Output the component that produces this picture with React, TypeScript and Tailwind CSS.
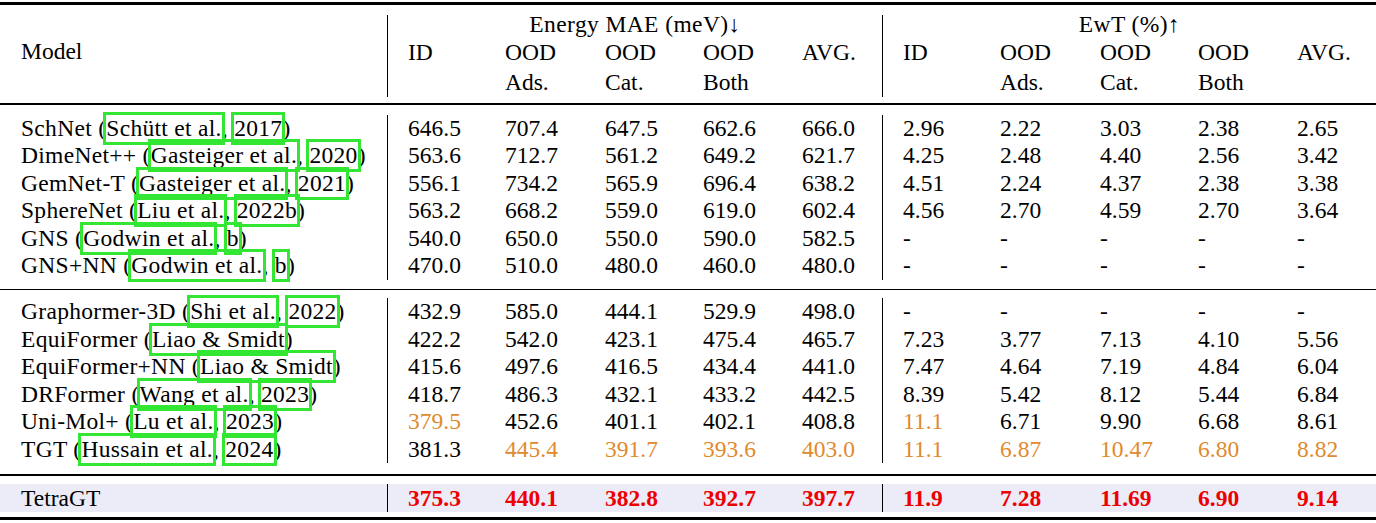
import type { ReactNode } from 'react';

type RowData = {
  model: ReactNode;
  e: string[];
  w: string[];
};

// cite link boxes drawn by the pdf viewer over the reference
function Cite({ children }: { children: ReactNode }) {
  return (
    <span className="relative">
      {children}
      <span className="pointer-events-none absolute -left-[3px] -right-[3px] -top-[3px] -bottom-[4px] border-[3px] border-[#33e633]" />
    </span>
  );
}

function Ref({ name, who, year }: { name: string; who: string; year?: string }) {
  return (
    <>
      {name} (<Cite>{who}</Cite>
      {year && (
        <>
          , <Cite>{year}</Cite>
        </>
      )}
      )
    </>
  );
}

const dash = ['-', '-', '-', '-', '-'];

const groupA: RowData[] = [
  {
    model: <Ref name="SchNet" who="Schütt et al." year="2017" />,
    e: ['646.5', '707.4', '647.5', '662.6', '666.0'],
    w: ['2.96', '2.22', '3.03', '2.38', '2.65'],
  },
  {
    model: <Ref name="DimeNet++" who="Gasteiger et al." year="2020" />,
    e: ['563.6', '712.7', '561.2', '649.2', '621.7'],
    w: ['4.25', '2.48', '4.40', '2.56', '3.42'],
  },
  {
    model: <Ref name="GemNet-T" who="Gasteiger et al." year="2021" />,
    e: ['556.1', '734.2', '565.9', '696.4', '638.2'],
    w: ['4.51', '2.24', '4.37', '2.38', '3.38'],
  },
  {
    model: <Ref name="SphereNet" who="Liu et al." year="2022b" />,
    e: ['563.2', '668.2', '559.0', '619.0', '602.4'],
    w: ['4.56', '2.70', '4.59', '2.70', '3.64'],
  },
  {
    model: <Ref name="GNS" who="Godwin et al." year="b" />,
    e: ['540.0', '650.0', '550.0', '590.0', '582.5'],
    w: dash,
  },
  {
    model: <Ref name="GNS+NN" who="Godwin et al." year="b" />,
    e: ['470.0', '510.0', '480.0', '460.0', '480.0'],
    w: dash,
  },
];

// '*' marks the orange (second best) values
const groupB: RowData[] = [
  {
    model: <Ref name="Graphormer-3D" who="Shi et al." year="2022" />,
    e: ['432.9', '585.0', '444.1', '529.9', '498.0'],
    w: dash,
  },
  {
    model: <Ref name="EquiFormer" who="Liao & Smidt" />,
    e: ['422.2', '542.0', '423.1', '475.4', '465.7'],
    w: ['7.23', '3.77', '7.13', '4.10', '5.56'],
  },
  {
    model: <Ref name="EquiFormer+NN" who="Liao & Smidt" />,
    e: ['415.6', '497.6', '416.5', '434.4', '441.0'],
    w: ['7.47', '4.64', '7.19', '4.84', '6.04'],
  },
  {
    model: <Ref name="DRFormer" who="Wang et al." year="2023" />,
    e: ['418.7', '486.3', '432.1', '433.2', '442.5'],
    w: ['8.39', '5.42', '8.12', '5.44', '6.84'],
  },
  {
    model: <Ref name="Uni-Mol+" who="Lu et al." year="2023" />,
    e: ['*379.5', '452.6', '401.1', '402.1', '408.8'],
    w: ['*11.1', '6.71', '9.90', '6.68', '8.61'],
  },
  {
    model: <Ref name="TGT" who="Hussain et al." year="2024" />,
    e: ['381.3', '*445.4', '*391.7', '*393.6', '*403.0'],
    w: ['*11.1', '*6.87', '*10.47', '*6.80', '*8.82'],
  },
];

const ours = {
  e: ['375.3', '440.1', '382.8', '392.7', '397.7'],
  w: ['11.9', '7.28', '11.69', '6.90', '9.14'],
};

const cols = 'grid grid-cols-[97px_100px_98px_99px_1fr] pl-[20px]';

function Num({ v, className = '' }: { v: string; className?: string }) {
  const orange = v.startsWith('*');
  return (
    <div className={`whitespace-nowrap ${orange ? 'text-[#e08a2e]' : ''} ${className}`}>
      {orange ? v.slice(1) : v}
    </div>
  );
}

function NumBlock({ rows, width }: { rows: string[][]; width: string }) {
  return (
    <div className={width}>
      {rows.map((r, i) => (
        <div key={i} className={`${cols} h-[27.5px]`}>
          {r.map((v, j) => (
            <Num key={j} v={v} />
          ))}
        </div>
      ))}
    </div>
  );
}

function Group({ rows, className }: { rows: RowData[]; className: string }) {
  return (
    <div className={`flex ${className}`}>
      <div className="w-[387px] pl-[21px] tracking-[0.3px]">
        {rows.map((r, i) => (
          <div key={i} className="h-[27.5px] whitespace-nowrap">
            {r.model}
          </div>
        ))}
      </div>
      <div className="w-px bg-black" />
      <NumBlock rows={rows.map((r) => r.e)} width="w-[494px]" />
      <div className="w-px bg-black" />
      <NumBlock rows={rows.map((r) => r.w)} width="flex-1" />
    </div>
  );
}

function HeadBlock({ title, width }: { title: string; width: string }) {
  return (
    <div className={width}>
      <div className="h-[28px] leading-[28px] text-center tracking-[0.4px]">{title}</div>
      <div className={`${cols} h-[28px] leading-[28px]`}>
        <div>ID</div>
        <div>OOD</div>
        <div>OOD</div>
        <div>OOD</div>
        <div>AVG.</div>
      </div>
      <div className={`${cols} h-[28px] leading-[28px] pt-[2px]`}>
        <div />
        <div>Ads.</div>
        <div>Cat.</div>
        <div>Both</div>
        <div />
      </div>
    </div>
  );
}

export default function App() {
  return (
    <div className="w-[1376px] min-h-[523px] bg-white pt-[2px] text-black text-[23.5px] leading-[27.5px] [font-family:Liberation_Serif,Times_New_Roman,serif]">
      <div className="h-[3px] bg-black" />

      <div className="flex pt-[5px] pb-[9px]">
        <div className="w-[387px] pl-[21px] flex items-center">Model</div>
        <div className="w-px bg-black mt-[5px] -mb-[3px]" />
        <HeadBlock title="Energy MAE (meV)↓" width="w-[494px]" />
        <div className="w-px bg-black mt-[5px] -mb-[3px]" />
        <HeadBlock title="EwT (%)↑" width="flex-1" />
      </div>
      <div className="h-[1.5px] bg-black" />

      <Group rows={groupA} className="pt-[10px] pb-[9px]" />
      <div className="h-[1.5px] bg-black" />

      <Group rows={groupB} className="pt-[8px] pb-[11px]" />
      <div className="h-[1.5px] bg-black" />

      <div className="pt-[8px] pb-[5px]">
        <div className="flex h-[28px] leading-[28px] bg-[#ececf8]">
          <div className="w-[387px] pl-[21px]">TetraGT</div>
          <div className="w-px bg-black" />
          <div className={`w-[494px] ${cols}`}>
            {ours.e.map((v, i) => (
              <Num key={i} v={v} className="font-bold text-[#ee0000]" />
            ))}
          </div>
          <div className="w-px bg-black" />
          <div className={`flex-1 ${cols}`}>
            {ours.w.map((v, i) => (
              <Num key={i} v={v} className="font-bold text-[#ee0000]" />
            ))}
          </div>
        </div>
      </div>
      <div className="h-[3.5px] bg-black" />
    </div>
  );
}
